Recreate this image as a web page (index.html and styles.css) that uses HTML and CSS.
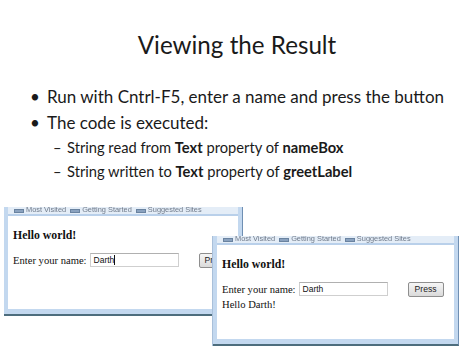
FILE: index.html
```html
<!DOCTYPE html>
<html>
<head>
<meta charset="utf-8">
<link rel="stylesheet" href="styles.css">
</head>
<body>
<div class="slide">
  <h1 class="title">Viewing the Result</h1>
  <ul class="bullets">
    <li>Run with Cntrl-F5, enter a name and press the button</li>
    <li>The code is executed:
      <ul class="sub">
        <li>String read from <b>Text</b> property of <b>nameBox</b></li>
        <li>String written to <b>Text</b> property of <b>greetLabel</b></li>
      </ul>
    </li>
  </ul>
  <div class="desk">
    <div class="win win1">
      <div class="favbar"><span class="fav"><i class="ico"></i>Most Visited</span><span class="fav"><i class="ico"></i>Getting Started</span><span class="fav"><i class="ico"></i>Suggested Sites</span></div>
      <div class="content">
        <div class="hello">Hello world!</div>
        <div class="row">
          <span class="lbl">Enter your name:</span>
          <span class="box">Darth<span class="caret"></span></span>
          <span class="btn">Pres</span>
        </div>
      </div>
    </div>
    <div class="win win2">
      <div class="favbar"><span class="fav"><i class="ico"></i>Most Visited</span><span class="fav"><i class="ico"></i>Getting Started</span><span class="fav"><i class="ico"></i>Suggested Sites</span></div>
      <div class="content">
        <div class="hello">Hello world!</div>
        <div class="row">
          <span class="lbl">Enter your name:</span>
          <span class="box">Darth</span>
          <span class="btn">Press</span>
        </div>
        <div class="greet">Hello Darth!</div>
      </div>
    </div>
  </div>
</div>
</body>
</html>
```
FILE: styles.css
```css
html, body { margin: 0; padding: 0; background: #fff; }
.slide { width: 474px; height: 355px; position: relative; overflow: hidden; font-family: Lato, "Open Sans", sans-serif; color: #1a1a1a; }
.title { margin: 0; padding-top: 29px; text-align: center; font-weight: 400; font-size: 24.2px; line-height: 32px; }
.bullets { list-style: none; margin: 0; padding: 0; margin-top: 23px; }
.bullets > li { position: relative; padding-left: 47px; font-size: 17px; line-height: 26px; }
.bullets > li::before { content: "•"; position: absolute; left: 30px; top: 0; }
.sub { list-style: none; margin: 0; padding: 0; margin-top: 0; }
.sub > li { position: relative; padding-left: 20px; font-size: 14.7px; line-height: 23.5px; }
.sub > li::before { content: "–"; position: absolute; left: 6px; top: 0; }
.sub b { font-weight: 700; }
.desk { position: absolute; left: 0; top: 0; width: 474px; height: 355px; }
.win { position: absolute; box-sizing: border-box; background: #c3d8ef; border-bottom: 2px solid #4d6d7d; border-right: 1px solid #6f8fb3; padding: 0 4px 5px 4px; display: flex; flex-direction: column; }
.win1 { left: 4px; top: 207px; width: 239px; height: 109px; }
.win2 { left: 213px; top: 236px; width: 246px; height: 110px; box-shadow: -1px 0 0 #a9c0da; }
.favbar { height: 7px; overflow: hidden; background: #e4edf7; border-bottom: 2px solid #b9d0ea; font-family: "Liberation Sans", sans-serif; font-size: 7.4px; color: #6f7a8a; white-space: nowrap; display: flex; gap: 4px; padding-left: 6px; line-height: 9px; }
.fav { display: inline-flex; align-items: flex-start; gap: 2px; margin-top: -2px; filter: blur(0.45px); }
.ico { display: inline-block; width: 10px; height: 4px; margin-top: 4px; background: #8aa2bf; border: 1px solid #6a83a0; box-sizing: border-box; }
.content { flex: 1; background: #fff; padding: 12px 0 0 5px; font-family: "Liberation Serif", serif; color: #111; font-size: 10.6px; }
.hello { font-weight: 700; font-size: 11.8px; line-height: 14px; }
.row { display: flex; align-items: center; margin-top: 11px; height: 14px; }
.lbl { white-space: nowrap; }
.box { box-sizing: border-box; width: 89px; height: 14px; border: 1px solid #cfcfcf; border-top-color: #b0b0b0; margin-left: 3px; font-family: "Liberation Sans", sans-serif; font-size: 8.5px; line-height: 12px; padding-left: 3px; display: flex; align-items: center; flex-shrink: 0; }
.caret { display: inline-block; width: 1px; height: 10px; background: #111; }
.btn { box-sizing: border-box; width: 36px; height: 15px; margin-left: 20px; border: 1px solid #8e8e8e; border-radius: 2px; background: linear-gradient(#f6f6f6, #dadada); font-family: "Liberation Sans", sans-serif; font-size: 8.6px; line-height: 13px; text-align: center; color: #222; flex-shrink: 0; }
.win1 .btn { text-align: left; padding-left: 5px; }
.greet { margin-top: 2px; line-height: 14px; }
```
